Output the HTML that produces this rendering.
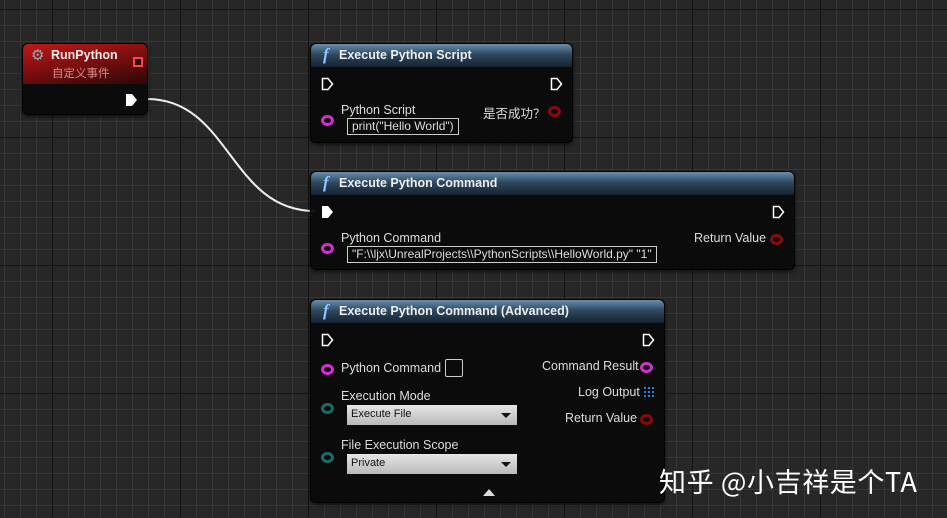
<!DOCTYPE html>
<html><head><meta charset="utf-8"><style>
*{margin:0;padding:0;box-sizing:border-box}
body{width:947px;height:518px;overflow:hidden;position:relative;font-family:"Liberation Sans","Noto Sans CJK SC",sans-serif;color:#ddd;
background-color:#272727;
background-image:
linear-gradient(to right,#141414 1px,transparent 1px),
linear-gradient(to bottom,#141414 1px,transparent 1px),
linear-gradient(to right,#373737 1px,transparent 1px),
linear-gradient(to bottom,#373737 1px,transparent 1px);
background-size:128px 128px,128px 128px,16px 16px,16px 16px;
background-position:52px 9px,52px 9px,4px 9px,4px 9px;}
.node{position:absolute;background:rgba(10,10,10,.93);border-radius:6px;border:1px solid #000;box-shadow:0 2px 4px rgba(0,0,0,.6)}
.hdr{height:23px;border-radius:5px 5px 0 0;background:linear-gradient(#6b8ea8,#2d4860 45%,#15222e);font-weight:bold;font-size:12.5px;color:#eee;padding:4px 0 0 28px;position:relative}
.hdr i{position:absolute;left:12px;top:1px;font-family:"Liberation Serif",serif;font-size:17px;color:#8cc6ff;font-weight:bold}
.t{position:absolute;font-size:12.5px;color:#ddd;white-space:nowrap}
.exec{position:absolute;width:13px;height:14px}
.pin{position:absolute;width:13px;height:11px;border-radius:50%;border:3px solid #d22ed2}
.box{position:absolute;border:1px solid #ccc;font-size:12px;padding:0 4px;line-height:15px;white-space:nowrap}
.dd{position:absolute;width:170px;height:20px;background:linear-gradient(#e6e6e6,#b9b9b9);color:#111;font-size:11px;padding:3px 4px}
.dd:after{content:"";position:absolute;right:6px;top:8px;border:5px solid transparent;border-top:5px solid #111;border-bottom:none}
</style></head><body>
<svg style="position:absolute;left:0;top:0" width="947" height="518"><path d="M147 99 C230 99 230 211 315 211" stroke="#eee" stroke-width="2" fill="none"/></svg>

<div class="node" style="left:22px;top:43px;width:126px;height:72px">
<div style="height:40px;border-radius:5px 5px 0 0;background:linear-gradient(170deg,#c01818,#7a0e0e 50%,#2a0808)"></div>
<div style="position:absolute;left:8px;top:2px;font-size:15px;color:#9ab">⚙</div>
<div class="t" style="left:28px;top:4px;font-weight:bold;color:#eee">RunPython</div>
<div class="t" style="left:29px;top:21px;color:#d88;font-size:11.5px">自定义事件</div>
<div style="position:absolute;left:110px;top:13px;width:10px;height:10px;border:2px solid #f44;background:#200"></div>
<svg class="exec" style="left:102px;top:49px"><path d="M1 1H7L12 7L7 13H1Z" fill="#fff"/></svg>
</div>

<div class="node" style="left:310px;top:43px;width:263px;height:100px">
<div class="hdr"><i>f</i>Execute Python Script</div>
<svg class="exec" style="left:10px;top:33px"><path d="M1.5 1.5H7L11.5 7L7 12.5H1.5Z" fill="none" stroke="#fff" stroke-width="1.5"/></svg>
<svg class="exec" style="left:239px;top:33px"><path d="M1.5 1.5H7L11.5 7L7 12.5H1.5Z" fill="none" stroke="#fff" stroke-width="1.5"/></svg>
<div class="pin" style="left:10px;top:71px"></div>
<div class="t" style="left:30px;top:59px">Python Script</div>
<div class="box" style="left:36px;top:74px">print("Hello World")</div>
<div class="t" style="left:172px;top:59px">是否成功？</div>
<div class="pin" style="left:237px;top:62px;border-color:#8a0a0a"></div>
</div>

<div class="node" style="left:310px;top:171px;width:485px;height:99px">
<div class="hdr"><i>f</i>Execute Python Command</div>
<svg class="exec" style="left:10px;top:33px"><path d="M1 1H7L12 7L7 13H1Z" fill="#fff"/></svg>
<svg class="exec" style="left:461px;top:33px"><path d="M1.5 1.5H7L11.5 7L7 12.5H1.5Z" fill="none" stroke="#fff" stroke-width="1.5"/></svg>
<div class="pin" style="left:10px;top:71px"></div>
<div class="t" style="left:30px;top:59px">Python Command</div>
<div class="box" style="left:36px;top:74px">"F:\\ljx\UnrealProjects\\PythonScripts\\HelloWorld.py" "1"</div>
<div class="t" style="left:383px;top:59px">Return Value</div>
<div class="pin" style="left:459px;top:62px;border-color:#8a0a0a"></div>
</div>

<div class="node" style="left:310px;top:299px;width:355px;height:204px">
<div class="hdr"><i>f</i>Execute Python Command (Advanced)</div>
<svg class="exec" style="left:10px;top:33px"><path d="M1.5 1.5H7L11.5 7L7 12.5H1.5Z" fill="none" stroke="#fff" stroke-width="1.5"/></svg>
<svg class="exec" style="left:331px;top:33px"><path d="M1.5 1.5H7L11.5 7L7 12.5H1.5Z" fill="none" stroke="#fff" stroke-width="1.5"/></svg>
<div class="pin" style="left:10px;top:64px"></div>
<div class="t" style="left:30px;top:61px">Python Command</div>
<div style="position:absolute;left:134px;top:59px;width:18px;height:18px;border:1px solid #ccc;border-radius:2px"></div>
<div class="pin" style="left:10px;top:103px;border-color:#1b6b66"></div>
<div class="t" style="left:30px;top:89px">Execution Mode</div>
<div class="dd" style="left:36px;top:105px">Execute File</div>
<div class="pin" style="left:10px;top:152px;border-color:#1b6b66"></div>
<div class="t" style="left:30px;top:138px">File Execution Scope</div>
<div class="dd" style="left:36px;top:154px">Private</div>
<div class="t" style="left:231px;top:59px">Command Result</div>
<div class="pin" style="left:329px;top:62px"></div>
<div class="t" style="left:267px;top:85px">Log Output</div>
<div style="position:absolute;left:333px;top:87px;width:11px;height:11px;background:repeating-linear-gradient(to right,#2a7ae0 0 2px,transparent 2px 4px),#111;-webkit-mask:repeating-linear-gradient(#000 0 2px,transparent 2px 4px)"></div>
<div class="t" style="left:254px;top:111px">Return Value</div>
<div class="pin" style="left:329px;top:114px;border-color:#8a0a0a"></div>
<div style="position:absolute;left:172px;top:189px;border:6px solid transparent;border-bottom:7px solid #ddd;border-top:none"></div>
</div>

<div class="t" style="left:659px;top:461px;font-size:27px;letter-spacing:0.6px;color:#fff;font-family:'Noto Sans CJK SC','Liberation Sans',sans-serif">知乎 @小吉祥是个TA</div>
</body></html>
